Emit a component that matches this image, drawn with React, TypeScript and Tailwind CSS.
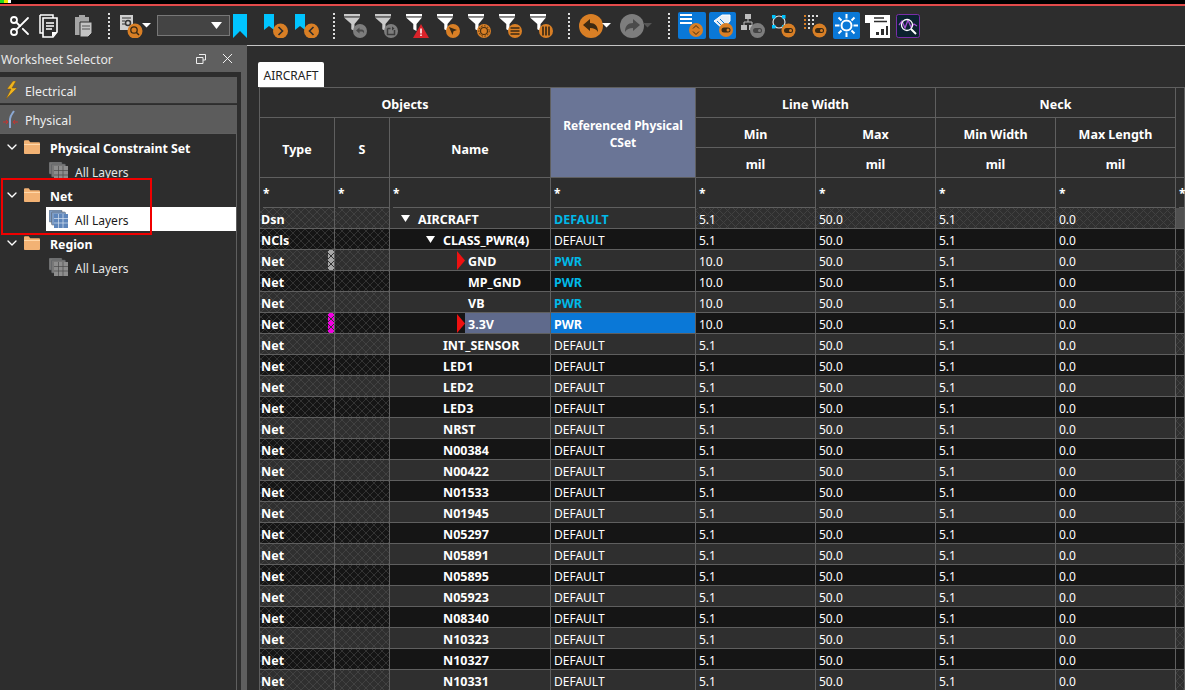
import { ReactNode } from "react";
import { ChevronDown, Scissors, X } from "lucide-react";

const ORANGE = "#d97f25";
const GRAY = "#7d7d7d";
const CYAN = "#00c4ff";
const BLUE = "#0a78d7";

const rowGrid =
  "grid grid-cols-[75px_55px_161px_145px_120px_120px_120px_120px_9px]";
const line = "border-r border-b border-[#5f5f5f]";
const hatchLight =
  "bg-[repeating-linear-gradient(45deg,#414141_0_1px,transparent_1px_5.66px),repeating-linear-gradient(-45deg,#414141_0_1px,transparent_1px_5.66px)]";
const hatchDark =
  "bg-[repeating-linear-gradient(45deg,#333_0_1px,transparent_1px_5.66px),repeating-linear-gradient(-45deg,#333_0_1px,transparent_1px_5.66px)]";

type Row = {
  type: string;
  name: string;
  indent: "a" | "b" | "c";
  cset: string;
  min?: string;
  open?: boolean;
  flag?: boolean;
  swatch?: string;
};

const nets = [
  "INT_SENSOR", "LED1", "LED2", "LED3", "NRST", "N00384", "N00422", "N01533",
  "N01945", "N05297", "N05891", "N05895", "N05923", "N08340", "N10323",
  "N10327", "N10331",
];

const rows: Row[] = [
  { type: "Dsn", name: "AIRCRAFT", indent: "a", cset: "DEFAULT", open: true },
  { type: "NCls", name: "CLASS_PWR(4)", indent: "b", cset: "DEFAULT", open: true },
  { type: "Net", name: "GND", indent: "c", cset: "PWR", min: "10.0", flag: true, swatch: "bg-[#a8a8a8]" },
  { type: "Net", name: "MP_GND", indent: "c", cset: "PWR", min: "10.0" },
  { type: "Net", name: "VB", indent: "c", cset: "PWR", min: "10.0" },
  { type: "Net", name: "3.3V", indent: "c", cset: "PWR", min: "10.0", flag: true, swatch: "bg-[#f000e0]" },
  ...nets.map((name): Row => ({ type: "Net", name, indent: "b", cset: "DEFAULT" })),
];

function Badge({ color, children }: { color: string; children?: ReactNode }) {
  return (
    <g>
      <circle cx="16" cy="17" r="7" fill={color} />
      {children}
    </g>
  );
}

function Funnel({ light, children }: { light?: boolean; children: ReactNode }) {
  const top = light ? "#c9c9c9" : "#ffffff";
  return (
    <svg width="23" height="24" viewBox="0 0 23 24" className="overflow-visible">
      <rect x="0" y="0" width="16" height="2.4" fill={top} />
      <path d="M0 3.6h16l-5.5 6.4v7l-3.2-1.8V10z" fill={top} />
      {children}
    </svg>
  );
}

function Caret({ dim }: { dim?: boolean }) {
  return (
    <svg width="9" height="24" viewBox="0 0 9 24">
      <path d="M0 9h9l-4.5 4.5z" fill={dim ? "#555" : "#fff"} />
    </svg>
  );
}

function Dots({ className }: { className: string }) {
  return <div className={`h-[26px] w-[2px] border-l-2 border-dotted border-[#ddd] ${className}`} />;
}

function Toolbar() {
  return (
    <div className="flex h-[39px] items-center pl-[8px]">
      <Scissors size={24} color="#fff" strokeWidth={1.8} />
      <svg width="19" height="24" viewBox="0 0 19 24" className="ml-[7px]">
        <path d="M1 1h13v3M1 1v18h3" fill="none" stroke="#fff" strokeWidth="1.5" />
        <path d="M4 4h14v14l-4 5H4z" fill="#2d2d2d" stroke="#fff" strokeWidth="1.6" />
        <path d="M7 9h8M7 12h8M7 15h6" stroke="#fff" strokeWidth="1.6" />
        <path d="M13 23v-5h5z" fill="#fff" />
      </svg>
      <svg width="19" height="24" viewBox="0 0 19 24" className="ml-[16px]">
        <path d="M1 3h4V1h6v2h4v5h-2v13H1z" fill="#a5a5a5" />
        <path d="M6 8h12v11l-4 4H6z" fill="#c4c4c4" stroke="#2d2d2d" />
        <path d="M8 12h8M8 15h8" stroke="#555" />
      </svg>
      <Dots className="ml-[15px]" />
      <svg width="24" height="24" viewBox="0 0 24 24" className="ml-[9px]">
        <path d="M1 1h13v15H1z" fill="#cfcfcf" />
        <path d="M3 4h9M3 7h3M3 10h3" stroke="#333" />
        <circle cx="9" cy="9" r="2.5" fill="none" stroke="#333" strokeWidth="1.5" />
        <circle cx="16" cy="17" r="7.5" fill={ORANGE} />
        <circle cx="15" cy="16" r="3.2" fill="none" stroke="#3a2a14" strokeWidth="1.3" />
        <path d="M17.5 18.5l2.5 2.5" stroke="#3a2a14" strokeWidth="1.5" />
      </svg>
      <div className="-ml-px">
        <Caret />
      </div>
      <div className="ml-[6px] flex h-[21px] w-[73px] items-center justify-end border border-[#777] bg-[#444] pr-[7px]">
        <svg width="11" height="7" viewBox="0 0 11 7">
          <path d="M0 0h11L5.5 7z" fill="#fff" />
        </svg>
      </div>
      <svg width="14" height="24" viewBox="0 0 14 24" className="ml-[3px]">
        <path d="M0 0h14v24l-7-7-7 7z" fill={CYAN} />
      </svg>
      <svg width="24" height="24" viewBox="0 0 24 24" className="ml-[17px]">
        <path d="M0 0h10v16l-5-4-5 4z" fill={CYAN} />
        <circle cx="16.500" cy="17" r="7.500" fill={ORANGE} />
        <path d="M14.500 13l4 4-4 4" fill="none" stroke="#2d2d2d" strokeWidth="1.600" />
      </svg>
      <svg width="24" height="24" viewBox="0 0 24 24" className="ml-[7px]">
        <path d="M0 0h10v16l-5-4-5 4z" fill={CYAN} />
        <circle cx="16.500" cy="17" r="7.500" fill={ORANGE} />
        <path d="M18.500 13l-4 4 4 4" fill="none" stroke="#2d2d2d" strokeWidth="1.600" />
      </svg>
      <Dots className="ml-[14px]" />
      <div className="ml-[9px] flex gap-[8px]">
        <Funnel light>
          <Badge color={GRAY}>
            <path d="M12 16.500l3.500-3v2h2c2 0 3 1.500 2.500 4-.6-1.500-1.500-2-2.500-2h-2v2z" fill="#4a4a4a" />
          </Badge>
        </Funnel>
        <Funnel light>
          <Badge color={GRAY}>
            <path d="M12.500 14.500h3M19.500 16v4.500h-7v-6" fill="none" stroke="#3c3c3c" strokeWidth="1.500" />
            <path d="M17 12.500l2.500 2-2.500 2z" fill="#3c3c3c" />
          </Badge>
        </Funnel>
        <Funnel>
          <path d="M15 10l8 14H7z" fill="#d9232a" />
          <path d="M15 14.500v5M15 20.500v1.500" stroke="#fff" strokeWidth="1.500" />
        </Funnel>
        <Funnel>
          <Badge color={ORANGE}>
            <path d="M12 13l8 3-3.500 1.200L15.500 21z" fill="#3a2a14" />
          </Badge>
        </Funnel>
        <Funnel>
          <Badge color={ORANGE}>
            <circle cx="16" cy="17" r="3.500" fill="none" stroke="#4a3010" strokeWidth="1.200" />
            <circle cx="16" cy="17" r="5.200" fill="none" stroke="#4a3010" strokeWidth="1" strokeDasharray="1.500 1.500" />
          </Badge>
        </Funnel>
        <Funnel>
          <Badge color={ORANGE}>
            <path d="M11.500 14h9M11.500 17h9M11.500 20h9" stroke="#3a2a14" strokeWidth="1.700" />
          </Badge>
        </Funnel>
        <Funnel>
          <Badge color={ORANGE}>
            <path d="M13 12.500v9M16 12.500v9M19 12.500v9" stroke="#3a2a14" strokeWidth="1.700" />
          </Badge>
        </Funnel>
      </div>
      <Dots className="ml-[15px]" />
      <svg width="24" height="24" viewBox="0 0 24 24" className="ml-[9px]">
        <circle cx="12" cy="12" r="12" fill={ORANGE} />
        <path d="M4 11l7-6v4c5 0 8 3 8 9-2-3-4-4-8-4v3z" fill="#3d2a12" />
      </svg>
      <div className="-ml-px">
        <Caret />
      </div>
      <svg width="24" height="24" viewBox="0 0 24 24" className="ml-[9px]">
        <circle cx="12" cy="12" r="12" fill={GRAY} />
        <path d="M20 11l-7-6v4c-5 0-8 3-8 9 2-3 4-4 8-4v3z" fill="#4b4b4b" />
      </svg>
      <div className="-ml-px">
        <Caret dim />
      </div>
      <Dots className="ml-[16px]" />
      <svg width="28" height="27" viewBox="0 0 28 27" className="ml-[8px]">
        <rect width="28" height="27" rx="2" fill={BLUE} />
        <path d="M2 3h12M2 7h12M2 11h12" stroke="#fff" strokeWidth="1.800" />
        <circle cx="18" cy="18" r="7" fill={ORANGE} />
        <path d="M15 16.500l3-3 3 3M15 19.500l3 3 3-3" fill="none" stroke="#3a2a14" />
      </svg>
      <svg width="27" height="27" viewBox="0 0 27 27" className="ml-[3px]">
        <rect width="27" height="27" rx="2" fill={BLUE} />
        <path d="M5 9l8-6 8 0 0 6-7 8z" fill="#e8eef5" stroke="#fff" />
        <path d="M8 9l5 5M11 7l5 5" stroke={BLUE} />
        <circle cx="17" cy="18" r="7" fill={ORANGE} />
        <rect x="12.500" y="15.500" width="9" height="5" rx="2.500" fill="#3a2a14" />
        <circle cx="19" cy="18" r="1.500" fill={ORANGE} />
      </svg>
      <svg width="24" height="24" viewBox="0 0 24 24" className="ml-[5px]">
        <rect x="4" y="0" width="6" height="5" fill="#bdbdbd" />
        <rect x="0" y="11" width="6" height="5" fill="#bdbdbd" />
        <rect x="8" y="11" width="6" height="5" fill="#bdbdbd" />
        <path d="M7 5v3M3 11V8h8v3" fill="none" stroke="#bdbdbd" />
        <circle cx="16.500" cy="16.500" r="7.500" fill={GRAY} />
        <rect x="12" y="14" width="9" height="5" rx="2.500" fill="#444" />
        <circle cx="18.500" cy="16.500" r="1.500" fill={GRAY} />
      </svg>
      <svg width="24" height="24" viewBox="0 0 24 24" className="ml-[7px]">
        <circle cx="7" cy="8" r="6" fill="none" stroke="#ddd" strokeWidth="1.200" />
        <rect x="0" y="1" width="3.500" height="3.500" fill={CYAN} />
        <rect x="10" y="1" width="3.500" height="3.500" fill={CYAN} />
        <rect x="0" y="11" width="3.500" height="3.500" fill={CYAN} />
        <rect x="10" y="11" width="3.500" height="3.500" fill={CYAN} />
        <circle cx="16.500" cy="16.500" r="7" fill={ORANGE} />
        <rect x="12" y="14" width="9" height="5" rx="2.500" fill="#3a2a14" />
        <circle cx="18.500" cy="16.500" r="1.500" fill={ORANGE} />
      </svg>
      <svg width="24" height="24" viewBox="0 0 24 24" className="ml-[7px]">
        <path d="M1 1h2v2H1zM1 5h2v2H1zM1 9h2v2H1zM1 13h2v2H1z" fill={ORANGE} />
        <path d="M5 1h2v2H5zM9 1h2v2H9zM13 1h2v2h-2zM5 5h2v2H5zM9 5h2v2H9zM5 9h2v2H5zM9 9h2v2H9zM5 13h2v2H5z" fill="#ddd" />
        <circle cx="16.500" cy="16.500" r="7" fill={ORANGE} />
        <rect x="12" y="14" width="9" height="5" rx="2.500" fill="#3a2a14" />
        <circle cx="18.500" cy="16.500" r="1.500" fill={ORANGE} />
      </svg>
      <svg width="27" height="27" viewBox="0 0 27 27" className="ml-[6px]">
        <rect width="27" height="27" rx="2" fill={BLUE} />
        <circle cx="13.500" cy="13.500" r="5" fill="none" stroke="#fff" strokeWidth="2" />
        <path
          d="M13.500 2v4.500M13.500 20.500V25M2 13.500h4.500M20.500 13.500H25M5.500 5.500l3 3M18.500 18.500l3 3M21.500 5.500l-3 3M8.500 18.500l-3 3"
          stroke="#fff"
          strokeWidth="2"
        />
      </svg>
      <svg width="25" height="24" viewBox="0 0 25 24" className="ml-[5px]">
        <path d="M0 1h25v23H5V9H0z" fill="#fff" />
        <path d="M9 4h10M9 7.500h13" stroke="#2d2d2d" strokeWidth="1.600" />
        <path d="M11 21v-3h3v3zM16 21v-6h3v6zM21 21v-9h2v9z" fill="#2d2d2d" />
      </svg>
      <svg width="24" height="24" viewBox="0 0 24 24" className="ml-[6px]">
        <rect x="0.500" y="0.500" width="23" height="23" rx="2" fill="#0b2230" stroke="#7a2ea8" />
        <path d="M3 11l3-4 3 7 3-8 3 7 3-3 3 2" fill="none" stroke="#a24fd0" strokeWidth="1.300" />
        <circle cx="11" cy="11" r="5.500" fill="none" stroke="#fff" strokeWidth="1.300" />
        <path d="M15 15l5 5" stroke="#fff" strokeWidth="2" />
      </svg>
    </div>
  );
}

function Folder() {
  return (
    <svg width="16" height="14" viewBox="0 0 16 14">
      <path d="M0 1.500C0 .8.500.3 1.200.3h3.500l1.500 2h8.600c.7 0 1.200.5 1.200 1.200V13c0 .6-.5 1-1.200 1H1.200C.5 14 0 13.600 0 13z" fill="#f2b274" />
      <path d="M0 4h16v1H0z" fill="#ffd7a8" />
    </svg>
  );
}

function Layers({ active }: { active?: boolean }) {
  const back = active ? "#7d9cc4" : "#777";
  const front = active ? "#5e86bb" : "#8d8d8d";
  const grid = active ? "#d9e4f2" : "#4a4a4a";
  return (
    <svg width="19" height="18" viewBox="0 0 19 18" className="shrink-0">
      <rect x="0" y="0" width="13" height="12" rx="1" fill={back} stroke="#55595f" strokeWidth="0.500" />
      <rect x="2.500" y="2" width="14" height="13" rx="1" fill={back} stroke="#55595f" strokeWidth="0.500" />
      <rect x="5" y="4" width="14" height="14" fill={front} />
      <path d="M5 8.500h14M5 13h14M9.500 4v14M14 4v14" stroke={grid} strokeWidth="0.700" />
    </svg>
  );
}

function TreeGroup({ label, active }: { label: string; active?: boolean }) {
  return (
    <div>
      <div className="flex h-[24px] items-center">
        <ChevronDown size={16} color="#fff" strokeWidth={2} className="ml-[4px]" />
        <div className="ml-[4px]">
          <Folder />
        </div>
        <span className="ml-[10px] pt-[4px] text-[12.300px] font-bold text-white">{label}</span>
      </div>
      <div
        className={`ml-[46px] flex h-[24px] items-center pl-[3px] ${active ? "bg-white text-[#1a1a1a]" : "text-[#e6e6e6]"}`}
      >
        <Layers active={active} />
        <span className="ml-[7px] pt-[4px] text-[12px]">All Layers</span>
      </div>
    </div>
  );
}

function Sidebar() {
  return (
    <aside className="relative flex w-[247px] shrink-0 flex-col bg-[#5f5f5f]">
      <div className="flex h-[27px] items-center justify-between pl-[1px] pr-[11px] text-[12.300px] text-[#e8e8e8]">
        <span className="pt-[4px]">Worksheet Selector</span>
        <div className="flex items-center gap-[13px]">
          <svg width="10" height="10" viewBox="0 0 10 10">
            <path d="M3 .5h6.500V6H7M.5 3.500H7v6H.5z" fill="none" stroke="#eee" />
          </svg>
          <X size={17} color="#fff" strokeWidth={1.300} />
        </div>
      </div>
      <div className="mr-[6px] flex flex-1 flex-col bg-[#2d2d2d] pt-[5px]">
        <div className="mr-[4px] flex h-[27px] items-center border-b border-[#333] bg-[#5c5c5c] pl-[4px] text-[12.300px] text-[#eee]">
          <svg width="14" height="18" viewBox="0 0 14 18">
            <path d="M9 0L3 8h4l-5 10 11-11H8l4-7z" fill="#efb51f" stroke="#7a5210" strokeWidth="0.500" />
          </svg>
          <span className="ml-[7px] pt-[4px]">Electrical</span>
        </div>
        <div className="mr-[4px] mt-px flex h-[28px] items-center bg-[#5c5c5c] pl-[3px] text-[12.300px] text-[#eee]">
          <svg width="15" height="18" viewBox="0 0 15 18">
            <path d="M7 18V9c0-3 2-5 4-8" fill="none" stroke="#8ba8d2" strokeWidth="2" />
            <path d="M0 12h5M10 12h5" stroke="#c8322f" strokeWidth="1.200" />
            <path d="M3 10l2 2-2 2M12 10l-2 2 2 2" fill="none" stroke="#c8322f" />
          </svg>
          <span className="ml-[7px] pt-[4px]">Physical</span>
        </div>
        <div className="mr-[4px] flex-1 border-r border-t border-[#5f5f5f] pt-[1px]">
          <TreeGroup label="Physical Constraint Set" />
          <TreeGroup label="Net" active />
          <TreeGroup label="Region" />
        </div>
      </div>
      <div className="absolute left-[1px] top-[133px] h-[57px] w-[151px] border-2 border-[#f00000]" />
    </aside>
  );
}

function HeaderCell({ className, children }: { className?: string; children?: ReactNode }) {
  return (
    <div className={`flex items-center justify-center pt-[4px] text-center font-bold leading-[17px] text-white ${line} ${className ?? "text-[12.500px]"}`}>
      {children}
    </div>
  );
}

function FilterCell() {
  return (
    <div className="border-r border-[#5f5f5f] pl-[3px] pt-[10px]">
      <div className="h-[20px] border-b border-[#5f5f5f] text-[12px] font-bold leading-[12px] text-white">*</div>
    </div>
  );
}

function Header() {
  return (
    <>
      <div className={`${rowGrid} grid-rows-[30px_30px_30px]`}>
        <HeaderCell className="col-span-3 text-[12.500px]">Objects</HeaderCell>
        <HeaderCell className="row-span-3 bg-[#6a7596] px-[8px] pb-[2px] text-[12px]">Referenced Physical CSet</HeaderCell>
        <HeaderCell className="col-span-2 text-[12.500px]">Line Width</HeaderCell>
        <HeaderCell className="col-span-2 text-[12.500px]">Neck</HeaderCell>
        <HeaderCell className="row-span-3" />
        <HeaderCell className="row-span-2 text-[12.500px]">Type</HeaderCell>
        <HeaderCell className="row-span-2 text-[12.500px]">S</HeaderCell>
        <HeaderCell className="row-span-2 text-[12.500px]">Name</HeaderCell>
        <HeaderCell>Min</HeaderCell>
        <HeaderCell>Max</HeaderCell>
        <HeaderCell>Min Width</HeaderCell>
        <HeaderCell>Max Length</HeaderCell>
        <HeaderCell>mil</HeaderCell>
        <HeaderCell>mil</HeaderCell>
        <HeaderCell>mil</HeaderCell>
        <HeaderCell>mil</HeaderCell>
      </div>
      <div className={`${rowGrid} h-[30px]`}>
        {Array.from({ length: 9 }, (_, i) => (
          <FilterCell key={i} />
        ))}
      </div>
    </>
  );
}

const indents = { a: "pl-[28px]", b: "pl-[53px]", c: "pl-[78px]" };

function NameCell({ row }: { row: Row }) {
  return (
    <div className={`relative flex items-center pt-[4px] text-[12.500px] font-bold text-white ${line} ${indents[row.indent]}`}>
      {row.name === "3.3V" && <div className="absolute inset-y-0 left-[75px] right-0 bg-[#5f6a8c]" />}
      {row.open && (
        <svg width="9" height="7" viewBox="0 0 9 7" className="absolute top-[7px] -ml-[17px]">
          <path d="M0 0h9L4.500 7z" fill="#fff" />
        </svg>
      )}
      {row.flag && (
        <svg width="8" height="19" viewBox="0 0 8 19" className="absolute top-[1px] left-[67px] z-10">
          <path d="M0 0l8 9.500L0 19z" fill="#ee1111" />
        </svg>
      )}
      <span className="relative">{row.name}</span>
    </div>
  );
}

function DataRow({ row, index }: { row: Row; index: number }) {
  const dark = index % 2 === 1;
  const base = dark ? "bg-[#151515]" : "bg-[#2f2f2f]";
  const hatch = dark ? hatchDark : hatchLight;
  const first = index === 0;
  const valueBg = first ? hatchLight : "";
  const picked = row.name === "3.3V";
  const isPwr = row.cset === "PWR";
  const csetClass = picked
    ? "bg-[#0a78d7] text-[12.500px] font-bold text-white"
    : first || isPwr
      ? "text-[12.500px] font-bold text-[#00b9e8]"
      : "text-white";
  const values = [row.min ?? "5.1", "50.0", "5.1", "0.0"];

  return (
    <div className={`${rowGrid} h-[21px] grid-rows-[21px] text-[12px] leading-[20px] ${base}`}>
      <div className={`relative pl-[1px] pt-[2px] text-[12.500px] font-bold text-white ${line} ${hatch}`}>
        {row.type}
        {row.swatch && <div className={`absolute inset-y-0 right-0 w-[6px] ${row.swatch} ${hatchDark}`} />}
      </div>
      <div className={`${line} ${hatch}`} />
      <NameCell row={row} />
      <div className={`pl-[3px] pt-[2px] ${line} ${csetClass}`}>{row.cset}</div>
      {values.map((value, i) => (
        <div key={i} className={`pl-[3px] pt-[2px] text-white ${line} ${valueBg}`}>
          {value}
        </div>
      ))}
      <div className={`${line} ${first ? "bg-[#505050]" : dark ? "" : hatchLight}`} />
    </div>
  );
}

export default function App() {
  return (
    <div className="flex h-[690px] w-[1185px] flex-col overflow-hidden bg-[#2d2d2d] font-['Noto_Sans',sans-serif]">
      <div className="flex h-[4px] bg-black">
        <div className="h-[3px] w-[4px] bg-[#22dd22]" />
        <div className="h-[3px] w-[4px] bg-[#f2e600]" />
        <div className="h-[3px] w-[3px] bg-white" />
      </div>
      <div className="h-[2px] bg-[#e44b4b]" />
      <Toolbar />
      <div className="flex min-h-0 flex-1">
        <Sidebar />
        <main className="min-w-0 flex-1 border-t border-[#c4c4c4] pl-[12px] pt-[16px]">
          <div className="-ml-px flex h-[25px] w-[66px] items-center justify-center rounded-t-[2px] bg-white pt-[2px] text-[12px] text-[#222]">
            AIRCRAFT
          </div>
          <div className="w-[935px] border-l border-t border-[#5f5f5f]">
            <Header />
            {rows.map((row, index) => (
              <DataRow key={row.name} row={row} index={index} />
            ))}
          </div>
        </main>
      </div>
    </div>
  );
}
